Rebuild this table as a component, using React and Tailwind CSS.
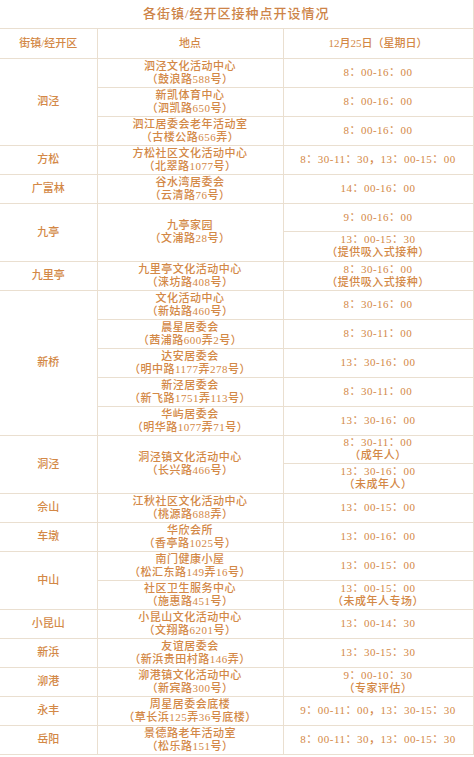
const rows = [
  { town: '泗泾', span: 3, name: '泗泾文化活动中心', addr: '（鼓浪路588号）', times: [['8：00-16：00']] },
  { name: '新凯体育中心', addr: '（泗凯路650号）', times: [['8：00-16：00']] },
  { name: '泗江居委会老年活动室', addr: '（古楼公路656弄）', times: [['8：00-16：00']] },
  { town: '方松', span: 1, name: '方松社区文化活动中心', addr: '（北翠路1077号）', times: [['8：30-11：30，13：00-15：00']] },
  { town: '广富林', span: 1, name: '谷水湾居委会', addr: '（云清路76号）', times: [['14：00-16：00']] },
  { town: '九亭', span: 1, name: '九亭家园', addr: '（文浦路28号）', times: [['9：00-16：00'], ['13：00-15：30', '（提供吸入式接种）']] },
  { town: '九里亭', span: 1, name: '九里亭文化活动中心', addr: '（涞坊路408号）', times: [['8：30-16：00', '（提供吸入式接种）']] },
  { town: '新桥', span: 5, name: '文化活动中心', addr: '（新姑路460号）', times: [['8：30-16：00']] },
  { name: '晨星居委会', addr: '（茜浦路600弄2号）', times: [['8：30-11：00']] },
  { name: '达安居委会', addr: '（明中路1177弄278号）', times: [['13：30-16：00']] },
  { name: '新泾居委会', addr: '（新飞路1751弄113号）', times: [['8：30-11：00']] },
  { name: '华屿居委会', addr: '（明华路1077弄71号）', times: [['13：30-16：00']] },
  { town: '洞泾', span: 1, name: '洞泾镇文化活动中心', addr: '（长兴路466号）', times: [['8：30-11：00', '（成年人）'], ['13：30-16：00', '（未成年人）']] },
  { town: '佘山', span: 1, name: '江秋社区文化活动中心', addr: '（桃源路688弄）', times: [['13：00-15：00']] },
  { town: '车墩', span: 1, name: '华欣会所', addr: '（香亭路1025号）', times: [['13：00-16：00']] },
  { town: '中山', span: 2, name: '南门健康小屋', addr: '（松汇东路149弄16号）', times: [['13：00-15：00']] },
  { name: '社区卫生服务中心', addr: '（施惠路451号）', times: [['13：00-15：00', '（未成年人专场）']] },
  { town: '小昆山', span: 1, name: '小昆山文化活动中心', addr: '（文翔路6201号）', times: [['13：00-14：30']] },
  { town: '新浜', span: 1, name: '友谊居委会', addr: '（新浜贵田村路146弄）', times: [['13：30-15：30']] },
  { town: '泖港', span: 1, name: '泖港镇文化活动中心', addr: '（新宾路300号）', times: [['9：00-10：30', '（专家评估）']] },
  { town: '永丰', span: 1, name: '周星居委会底楼', addr: '（草长浜125弄36号底楼）', times: [['9：00-11：00，13：30-15：30']] },
  { town: '岳阳', span: 1, name: '景德路老年活动室', addr: '（松乐路151号）', times: [['8：00-11：30，13：00-15：30']] },
]

const cell = 'border-b border-r border-[#eadfd0] text-center align-middle p-0'

function Lines({ items }) {
  return items.map((t, i) => <div key={i}>{t}</div>)
}

export default function App() {
  const body = []
  rows.forEach((r, idx) => {
    const multi = r.times.length > 1
    body.push(
      <tr key={idx} className={multi ? 'h-[28px]' : 'h-[29px]'}>
        {r.town && (
          <td rowSpan={r.span * (multi ? 2 : 1)} className={cell}>{r.town}</td>
        )}
        <td rowSpan={multi ? 2 : 1} className={cell + ' tracking-[0.5px]'}>
          <Lines items={[r.name, r.addr]} />
        </td>
        <td className={cell + ' tracking-[0.5px]'}>
          <Lines items={r.times[0]} />
        </td>
      </tr>
    )
    if (multi) {
      body.push(
        <tr key={idx + '-b'} className="h-[30px]">
          <td className={cell + ' tracking-[0.5px]'}>
            <Lines items={r.times[1]} />
          </td>
        </tr>
      )
    }
  })

  return (
    <div className="w-[474px] h-[757px] bg-white overflow-hidden font-['Liberation_Serif','Noto_Sans_CJK_SC',serif] font-medium text-[#d38846] text-[11px] leading-[13px]">
      <table className="w-[473px] table-fixed border-collapse">
        <colgroup>
          <col className="w-[97px]" />
          <col className="w-[186px]" />
          <col className="w-[190px]" />
        </colgroup>
        <tbody>
          <tr className="h-[28px]">
            <td colSpan={3} className={cell + ' text-[13px] text-[#cd8448] tracking-[1px]'}>
              各街镇/经开区接种点开设情况
            </td>
          </tr>
          <tr className="h-[30px]">
            <td className={cell}>街镇/经开区</td>
            <td className={cell}>地点</td>
            <td className={cell}>12月25日（星期日）</td>
          </tr>
          {body}
        </tbody>
      </table>
    </div>
  )
}
